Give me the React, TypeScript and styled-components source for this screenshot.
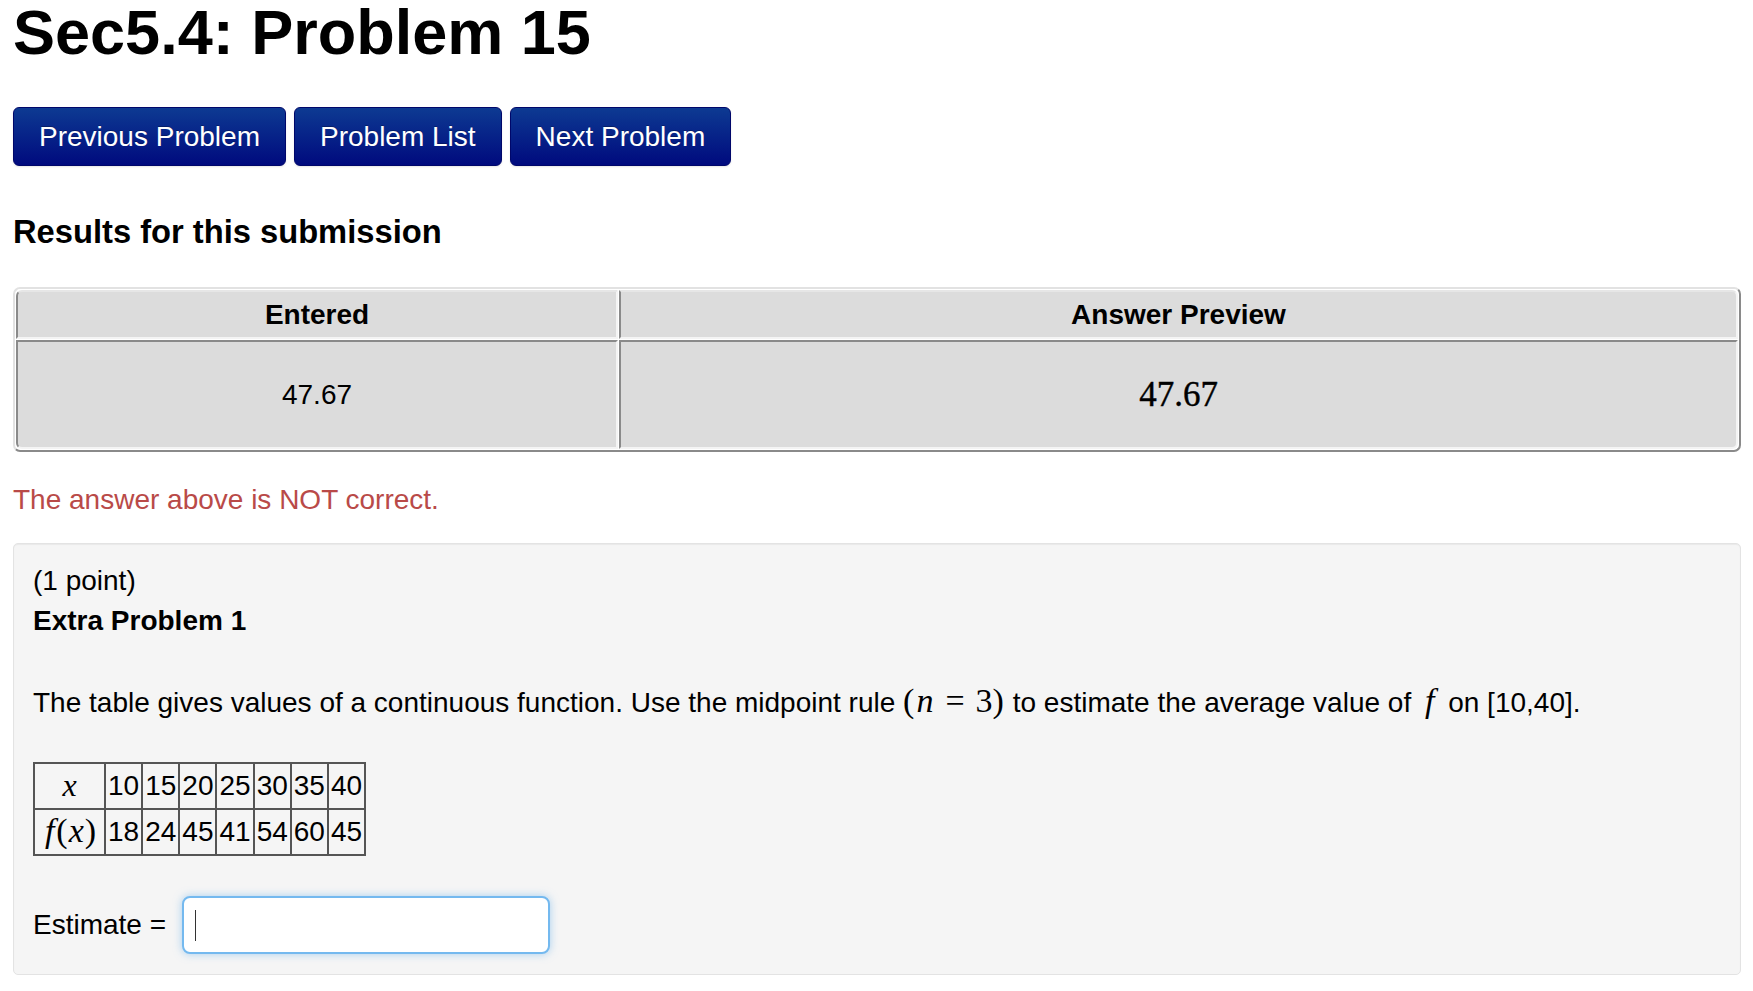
import styled, { createGlobalStyle } from "styled-components";

const GlobalStyle = createGlobalStyle`
    body {
        margin: 0;
        background: #ffffff;
        color: #000;
        font-family: "Liberation Sans", Arial, sans-serif;
    }
`;

const Page = styled.div`
    padding: 1px 12px 0 13px;
`;

const Title = styled.h1`
    margin: 0;
    font-size: 63px;
    line-height: 63px;
    font-weight: 700;
`;

const ButtonRow = styled.div`
    display: flex;
    gap: 8px;
    margin-top: 43px;
`;

const NavButton = styled.button`
    height: 59px;
    padding: 0 25px;
    border: 1px solid #00076a;
    border-radius: 6px;
    background: linear-gradient(to bottom, #0d3a92, #000a7e);
    color: #fff;
    font-family: "Liberation Sans", Arial, sans-serif;
    font-size: 28px;
    text-shadow: 0 -1px 0 rgba(0, 0, 0, 0.25);
    box-shadow: 0 1px 2px rgba(0, 0, 0, 0.1);
    cursor: pointer;
`;

const SubTitle = styled.h3`
    margin: 49px 0 0;
    font-size: 32.7px;
    line-height: 33px;
    font-weight: 700;
`;

const ResultTable = styled.table`
    margin-top: 39px;
    width: 1728px;
    border-collapse: separate;
    border-spacing: 1px;
    border: 2px solid;
    border-color: #e2e2e2 #8a8a8a #8a8a8a #e2e2e2;
    border-radius: 7px;
`;

const HeadCell = styled.th<{ $first?: boolean; $last?: boolean }>`
    height: 45px;
    padding: 0;
    background: #dcdcdc;
    border: 2px solid;
    border-color: #e6e6e6 #f4f4f4 #f4f4f4 #8a8a8a;
    border-top-left-radius: ${(p) => (p.$first ? "6px" : "0")};
    border-top-right-radius: ${(p) => (p.$last ? "6px" : "0")};
    font-size: 28px;
    font-weight: 700;
    text-align: center;
`;

const BodyCell = styled.td<{ $first?: boolean; $last?: boolean; $math?: boolean }>`
    height: 105px;
    padding: 0;
    background: #dcdcdc;
    border: 2px solid;
    border-color: #8a8a8a #f4f4f4 #f4f4f4 #8a8a8a;
    border-bottom-left-radius: ${(p) => (p.$first ? "6px" : "0")};
    border-bottom-right-radius: ${(p) => (p.$last ? "6px" : "0")};
    text-align: center;
    font-family: ${(p) => (p.$math ? `"Liberation Serif", "DejaVu Serif", serif` : `"Liberation Sans", Arial, sans-serif`)};
    font-size: ${(p) => (p.$math ? "35px" : "28px")};
    -webkit-text-stroke: ${(p) => (p.$math ? "0.4px #000" : "0")};
`;

const Verdict = styled.div`
    margin-top: 28px;
    font-size: 28px;
    line-height: 40px;
    color: #b94a48;
`;

const ProblemBox = styled.div`
    margin-top: 23px;
    padding: 17px 19px 20px;
    background: #f5f5f5;
    border: 1px solid #e3e3e3;
    border-radius: 5px;
    box-shadow: inset 0 1px 1px rgba(0, 0, 0, 0.05);
    font-size: 28px;
    line-height: 40px;
`;

const Line = styled.div<{ $bold?: boolean; $gap?: number }>`
    font-weight: ${(p) => (p.$bold ? 700 : 400)};
    margin-top: ${(p) => p.$gap ?? 0}px;
`;

const Math = styled.span<{ $italic?: boolean; $size?: number; $pad?: number }>`
    font-family: "Liberation Serif", "DejaVu Serif", serif;
    font-style: ${(p) => (p.$italic ? "italic" : "normal")};
    font-size: ${(p) => p.$size ?? 34}px;
    padding: 0 ${(p) => p.$pad ?? 0}px;
`;

const ValueTable = styled.table`
    margin-top: 39px;
    border-collapse: collapse;
    border: 2px solid #555;
`;

const ValueCell = styled.td<{ $label?: boolean }>`
    height: 42px;
    padding: 0 ${(p) => (p.$label ? "4px" : "2px")};
    border: 2px solid #555;
    min-width: ${(p) => (p.$label ? "61px" : "0")};
    text-align: center;
    font-size: 28px;
    line-height: 42px;
`;

const EstimateRow = styled.div`
    display: flex;
    align-items: center;
    gap: 16px;
    margin-top: 40px;
`;

const InputWrap = styled.div`
    position: relative;
    display: flex;
`;

const AnswerInput = styled.input`
    box-sizing: border-box;
    width: 368px;
    height: 58px;
    padding: 0 12px;
    border: 2px solid #74b9ef;
    border-radius: 8px;
    background: #fff;
    box-shadow: 0 0 9px rgba(102, 175, 233, 0.55);
    font-family: "Liberation Sans", Arial, sans-serif;
    font-size: 28px;
    outline: none;
    caret-color: transparent;
`;

const Caret = styled.span`
    position: absolute;
    left: 13px;
    top: 14px;
    width: 1px;
    height: 31px;
    background: #333;
    pointer-events: none;
`;

const xs = [10, 15, 20, 25, 30, 35, 40];
const fx = [18, 24, 45, 41, 54, 60, 45];

export default function App() {
    return (
        <Page>
            <GlobalStyle />
            <Title>Sec5.4: Problem 15</Title>
            <ButtonRow>
                <NavButton>Previous Problem</NavButton>
                <NavButton>Problem List</NavButton>
                <NavButton>Next Problem</NavButton>
            </ButtonRow>
            <SubTitle>Results for this submission</SubTitle>
            <ResultTable>
                <thead>
                    <tr>
                        <HeadCell $first style={{ width: 598 }}>Entered</HeadCell>
                        <HeadCell $last>Answer Preview</HeadCell>
                    </tr>
                </thead>
                <tbody>
                    <tr>
                        <BodyCell $first>47.67</BodyCell>
                        <BodyCell $last $math>47.67</BodyCell>
                    </tr>
                </tbody>
            </ResultTable>
            <Verdict>The answer above is NOT correct.</Verdict>
            <ProblemBox>
                <Line>(1 point)</Line>
                <Line $bold>Extra Problem 1</Line>
                <Line $gap={40}>
                    The table gives values of a continuous function. Use the midpoint rule{" "}
                    <Math>(</Math>
                    <Math $italic $pad={2}>n</Math>
                    <Math $pad={10}>=</Math>
                    <Math $pad={1}>3)</Math> to estimate the average value of{" "}
                    <Math $italic $pad={6}>f</Math> on [10,40].
                </Line>
                <ValueTable>
                    <tbody>
                        <tr>
                            <ValueCell $label><Math $italic $size={32}>x</Math></ValueCell>
                            {xs.map((v) => (
                                <ValueCell key={v}>{v}</ValueCell>
                            ))}
                        </tr>
                        <tr>
                            <ValueCell $label>
                                <Math $italic $size={34} $pad={2}>f</Math>
                                <Math $size={34}>(</Math>
                                <Math $italic $size={34} $pad={1}>x</Math>
                                <Math $size={34}>)</Math>
                            </ValueCell>
                            {fx.map((v, i) => (
                                <ValueCell key={i}>{v}</ValueCell>
                            ))}
                        </tr>
                    </tbody>
                </ValueTable>
                <EstimateRow>
                    <span>Estimate =</span>
                    <InputWrap>
                        <AnswerInput />
                        <Caret />
                    </InputWrap>
                </EstimateRow>
            </ProblemBox>
        </Page>
    );
}
